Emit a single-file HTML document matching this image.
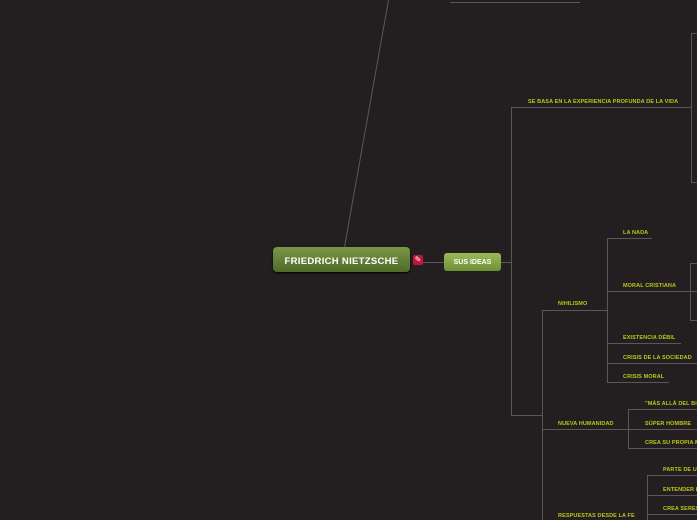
<html><head><style>
body{margin:0;width:697px;height:520px;background:#231f20;overflow:hidden;position:relative;font-family:"Liberation Sans",sans-serif}
.t{position:absolute;color:#b9c61a;font-size:5.5px;font-weight:bold;white-space:nowrap;letter-spacing:.1px}
svg{position:absolute;left:0;top:0}
</style></head><body>
<svg width="697" height="520" stroke="#5a5758" stroke-width="1" fill="none">
<path d="M344.5 247L388.5 0M450 2.5H580M500 262.5H511.5M511.5 107V415.5H542.5M511 107.5H691.5M691.5 33V182M691 33.5H697M691 182.5H697M542.5 310V520M542 310.5H607.5M607.5 238V382M607 238.5H652M607 291.5H690.5M690.5 263V320M690 263.5H697M690 291.5H697M690 320.5H697M607 343.5H681M607 363.5H697M607 382.5H669M542 429.5H628.5M628.5 409V448M628 409.5H697M628 429.5H697M628 448.5H697M647.5 475V520M647 475.5H697M647 495.5H697M647 514.5H697M423 262.5H444"/>
</svg>
<div style="position:absolute;left:273px;top:247px;width:137px;height:25px;border-radius:4px;background:linear-gradient(#7c9647,#4f6a28);box-shadow:0 1px 2px #000;color:#fff;font-weight:bold;font-size:9.5px;line-height:29px;text-align:center;letter-spacing:.3px">FRIEDRICH NIETZSCHE</div>
<div style="position:absolute;left:413px;top:255px;width:10px;height:10px;background:#c0163a;border-radius:2px;color:#fff;font-size:8px;line-height:10px;text-align:center">✎</div>
<div style="position:absolute;left:444px;top:253px;width:57px;height:18px;border-radius:3px;background:linear-gradient(#9aba5a,#6f8f36);color:#fff;font-weight:bold;font-size:7px;line-height:20px;text-align:center">SUS IDEAS</div>
<div class="t" style="left:528px;top:99px">SE BASA EN LA EXPERIENCIA PROFUNDA DE LA VIDA</div>
<div class="t" style="left:623px;top:230px">LA NADA</div>
<div class="t" style="left:623px;top:283px">MORAL CRISTIANA</div>
<div class="t" style="left:558px;top:301px">NIHILISMO</div>
<div class="t" style="left:623px;top:335px">EXISTENCIA DÉBIL</div>
<div class="t" style="left:623px;top:355px">CRISIS DE LA SOCIEDAD</div>
<div class="t" style="left:623px;top:374px">CRISIS MORAL</div>
<div class="t" style="left:645px;top:401px">"MÁS ALLÁ DEL BIEN</div>
<div class="t" style="left:558px;top:421px">NUEVA HUMANIDAD</div>
<div class="t" style="left:645px;top:421px">SÚPER HOMBRE</div>
<div class="t" style="left:645px;top:440px">CREA SU PROPIA MORAL</div>
<div class="t" style="left:663px;top:467px">PARTE DE UNA</div>
<div class="t" style="left:663px;top:487px">ENTENDER LA</div>
<div class="t" style="left:663px;top:506px">CREA SERES</div>
<div class="t" style="left:558px;top:513px">RESPUESTAS DESDE LA FE</div>
</body></html>
